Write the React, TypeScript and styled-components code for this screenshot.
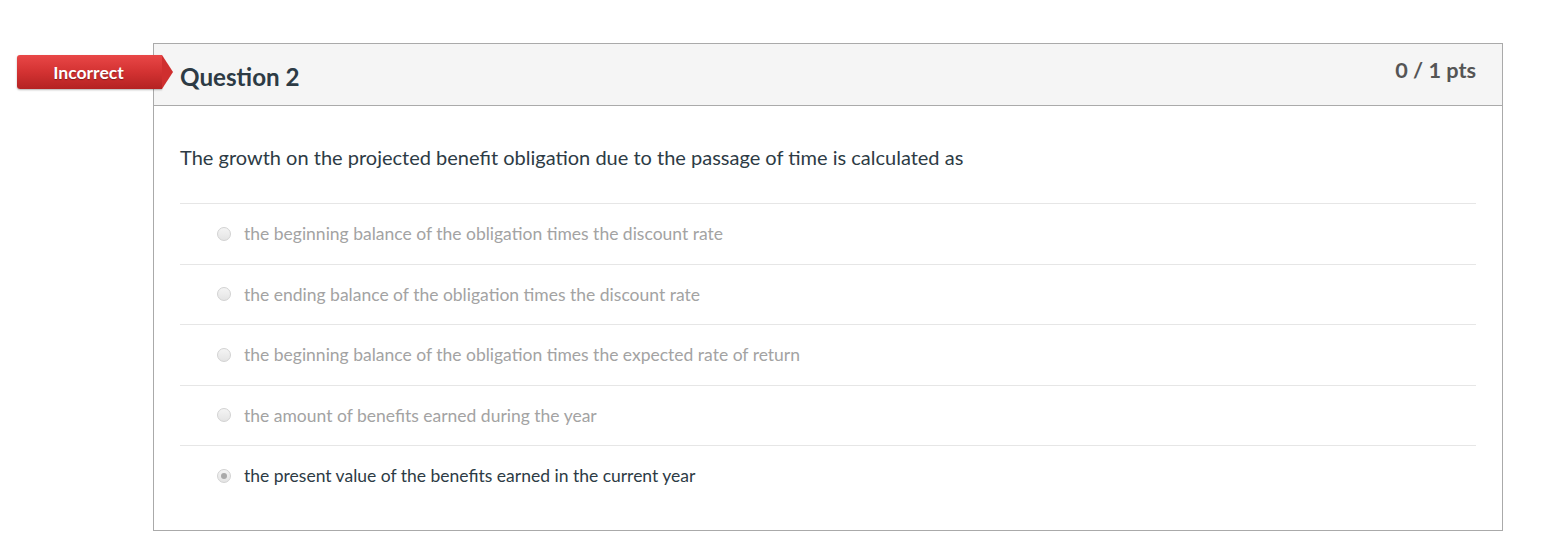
import React from 'react';
import styled, {createGlobalStyle} from "styled-components";

type AnswerType = {
    text: string
    selected?: boolean
}

const answers: AnswerType[] = [
    {text: "the beginning balance of the obligation times the discount rate"},
    {text: "the ending balance of the obligation times the discount rate"},
    {text: "the beginning balance of the obligation times the expected rate of return"},
    {text: "the amount of benefits earned during the year"},
    {text: "the present value of the benefits earned in the current year", selected: true},
]

const App = () => {
    return (
        <Page>
            <GlobalStyle/>
            <Card>
                <Badge>Incorrect</Badge>
                <Header>
                    <Title>Question 2</Title>
                    <Points>0 / 1 pts</Points>
                </Header>
                <Body>
                    <QuestionText>
                        The growth on the projected benefit obligation due to the passage of time is calculated as
                    </QuestionText>
                    <Answers>
                        {answers.map((a) => (
                            <Answer key={a.text}>
                                <Radio selected={a.selected}/>
                                <AnswerText selected={a.selected}>{a.text}</AnswerText>
                            </Answer>
                        ))}
                    </Answers>
                </Body>
            </Card>
        </Page>
    );
};

export default App;

const GlobalStyle = createGlobalStyle`
  body {
    margin: 0;
    background: #fff;
    font-family: Lato, "Open Sans", sans-serif;
  }
`
const Page = styled.div`
  padding: 43px 38px 14px 153px;
`
const Card = styled.div`
  position: relative;
  border: 1px solid #aaaaaa;
  background: #fff;
`
const Badge = styled.div`
  position: absolute;
  left: -137px;
  top: 11px;
  width: 145px;
  height: 34px;
  box-sizing: border-box;
  padding-right: 2px;
  display: flex;
  align-items: center;
  justify-content: center;
  color: #fff;
  font-size: 17.6px;
  font-weight: 700;
  text-shadow: 0 1px 1px rgba(0, 0, 0, 0.35);
  background: linear-gradient(to bottom, #e94747 0%, #d33232 50%, #b42222 100%);
  border-radius: 3px 0 0 3px;
  box-shadow: 0 1px 2px rgba(0, 0, 0, 0.3);

  &::after {
    content: "";
    position: absolute;
    right: -11px;
    top: 0;
    width: 0;
    height: 0;
    border-top: 17px solid transparent;
    border-bottom: 17px solid transparent;
    border-left: 11px solid #cf2f2f;
  }
`
const Header = styled.div`
  display: flex;
  justify-content: space-between;
  align-items: flex-start;
  height: 62px;
  box-sizing: border-box;
  padding: 13px 26px 0 26px;
  background: #f5f5f5;
  border-bottom: 1px solid #aaaaaa;
`
const Title = styled.h2`
  margin: 5px 0 0 0;
  font-size: 24.2px;
  line-height: 30px;
  font-weight: 700;
  color: #2d3b45;
`
const Points = styled.div`
  font-size: 21.7px;
  line-height: 26px;
  font-weight: 700;
  color: #555555;
`
const Body = styled.div`
  padding: 38px 26px 24px 26px;
`
const QuestionText = styled.p`
  margin: 0 0 33px 0;
  font-size: 20px;
  line-height: 26px;
  color: #2d3b45;
`
const Answers = styled.div`
  display: flex;
  flex-direction: column;
`
const Answer = styled.div`
  display: flex;
  align-items: center;
  height: 60.5px;
  box-sizing: border-box;
  padding-left: 37px;
  border-top: 1px solid #e6e6e6;
`
const Radio = styled.span<{ selected?: boolean }>`
  position: relative;
  width: 14px;
  height: 14px;
  box-sizing: border-box;
  border-radius: 50%;
  border: 1px solid #d2d2d2;
  background: linear-gradient(to bottom, #f4f4f4, #e4e4e4);
  flex-shrink: 0;

  &::after {
    content: "";
    display: ${props => props.selected ? "block" : "none"};
    position: absolute;
    left: 3px;
    top: 3px;
    width: 6px;
    height: 6px;
    border-radius: 50%;
    background: #a9a9a9;
  }
`
const AnswerText = styled.span<{ selected?: boolean }>`
  margin-left: 13px;
  font-size: 17.5px;
  color: ${props => props.selected ? "#2d3b45" : "#a3a3a3"};
`
